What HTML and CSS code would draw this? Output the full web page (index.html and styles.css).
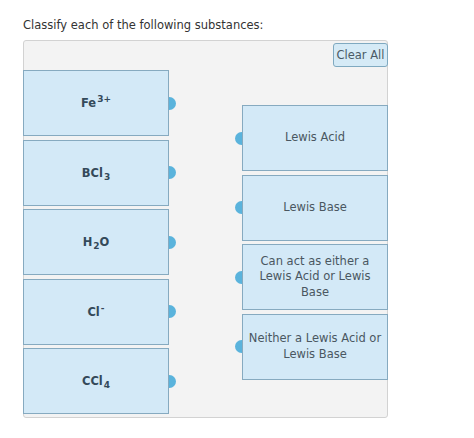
FILE: index.html
```html
<!DOCTYPE html>
<html lang="en">
<head>
    <meta charset="UTF-8">
    <title>Classify substances</title>
    <link rel="stylesheet" href="styles.css">
</head>
<body>
    <p class="prompt">Classify each of the following substances:</p>
    <div class="board">
        <div class="toolbar">
            <button class="clear-btn">Clear All</button>
        </div>
        <div class="columns">
            <div class="items">
                <div class="item"><span>Fe<sup>3+</sup></span></div>
                <div class="item"><span>BCl<sub>3</sub></span></div>
                <div class="item"><span>H<sub>2</sub>O</span></div>
                <div class="item"><span>Cl<sup>-</sup></span></div>
                <div class="item"><span>CCl<sub>4</sub></span></div>
            </div>
            <div class="targets">
                <div class="target">Lewis Acid</div>
                <div class="target">Lewis Base</div>
                <div class="target">Can act as either a Lewis Acid or Lewis Base</div>
                <div class="target">Neither a Lewis Acid or Lewis Base</div>
            </div>
        </div>
    </div>
</body>
</html>
```

FILE: styles.css
```css
body {
    margin: 0;
    padding: 0 0 0 23px;
    font-family: 'DejaVu Sans', Verdana, sans-serif;
    font-size: 11.5px;
    color: #333333;
    background: #FFFFFF;
}
.prompt {
    margin: 18px 0 0 0;
    line-height: 14px;
    height: 22px;
}
.board {
    position: relative;
    z-index: 0;
    box-sizing: border-box;
    width: 365px;
    height: 378px;
    background: #F3F3F3;
    border: 1px solid #D2D2D2;
    border-radius: 3px;
}
.toolbar {
    display: flex;
    justify-content: flex-end;
    margin: 2px -1px 0 0;
}
.clear-btn {
    box-sizing: border-box;
    height: 24px;
    width: 55px;
    padding: 0;
    font-family: inherit;
    font-size: 11.5px;
    color: #4A5A66;
    background: #D5EAF6;
    border: 1px solid #7FA9C0;
    border-radius: 3px;
}
.columns {
    display: flex;
    justify-content: space-between;
    margin: 0 -1px;
}
.items, .targets {
    display: flex;
    flex-direction: column;
    gap: 3.5px;
    width: 146px;
}
.items {
    margin-top: 3px;
}
.targets {
    margin-top: 38px;
}
.item, .target {
    position: relative;
    box-sizing: border-box;
    height: 66px;
    display: flex;
    align-items: center;
    justify-content: center;
    text-align: center;
    background: #D3E9F7;
    border: 1px solid #86AAC0;
}
.item {
    font-weight: bold;
    font-size: 11.5px;
    color: #34495A;
}
.item span {
    line-height: 14px;
}
.target {
    padding: 0 5px;
    line-height: 15.5px;
    color: #4A5761;
}
.item::after, .target::after {
    content: '';
    position: absolute;
    z-index: -1;
    top: 50%;
    width: 13px;
    height: 13px;
    margin-top: -6.5px;
    border-radius: 50%;
    background: #5AB3DC;
}
.item::after {
    right: -8px;
}
.target::after {
    left: -8px;
}
sup, sub {
    font-size: 9px;
    line-height: 0;
    position: relative;
    vertical-align: baseline;
}
sup {
    top: -5px;
    margin-left: 1px;
}
sub {
    top: 3px;
    margin-left: 1px;
}
```
